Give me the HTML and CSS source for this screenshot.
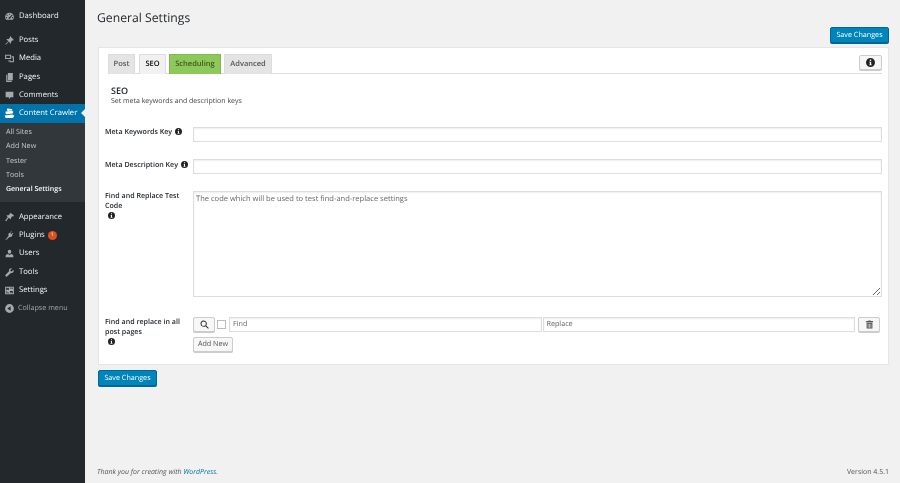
FILE: index.html
```html
<!DOCTYPE html>
<html lang="en">
<head>
<meta charset="utf-8">
<title>General Settings</title>
<link rel="stylesheet" href="styles.css">
</head>
<body>
<svg class="defs" width="0" height="0" aria-hidden="true">
  <symbol id="info" viewBox="0 0 16 16"><path fill-rule="evenodd" d="M8 0a8 8 0 1 1 0 16A8 8 0 0 1 8 0zM6.800 2.700v2.600h2.400V2.700zM5.800 6.600v1.600h1v3.200h-1V13h4.400v-1.600h-1V6.600z"/></symbol>
</svg>
<aside class="sidebar">
  <nav class="menu menu-first">
    <a class="item"><svg class="mi" viewBox="0 0 20 20"><path fill-rule="evenodd" d="M10 3a8 8 0 0 0-8 8c0 2 .7 3.700 1.900 5h12.200A8 8 0 0 0 18 11a8 8 0 0 0-8-8zM9 5h2v2H9zM5.500 6.500l1.500 1.400-1.400 1.400-1.400-1.500zM14.500 6.500l1.300 1.300-4 4.500a1.800 1.800 0 1 1-1.500-1.500zM3.500 11h2v2h-2zM14.500 11h2v2h-2z"/></svg>Dashboard</a>
  </nav>
  <nav class="menu menu-group">
    <a class="item"><svg class="mi" viewBox="0 0 20 20"><path d="M11 2l7 7-1.500 1-1-.5-3 3c.5 2 0 3-.5 3.500L8.500 12l-5 5.500-1-1L8 11.500 4.500 8C5 7.500 6 7 8 7.500l3-3-.5-1z"/></svg>Posts</a>
    <a class="item"><svg class="mi" viewBox="0 0 20 20"><path fill-rule="evenodd" d="M2 3h11v8H2zM4 5v4h7V5zM14 6h4v11h-8v-4h2v2h4V8h-2zM11 14.500a1.500 1.500 0 1 0 0 .1z"/></svg>Media</a>
    <a class="item"><svg class="mi" viewBox="0 0 20 20"><path d="M7 2h9v13H7zM4 5h2v11h8v2H4z"/></svg>Pages</a>
    <a class="item"><svg class="mi" viewBox="0 0 20 20"><path d="M3 3h14v10h-5l-3 4v-4H3z"/></svg>Comments</a>
  </nav>
  <div class="current">
    <a class="item item-current"><svg class="mi mi-white" viewBox="0 0 20 20"><path d="M6 1l8 1 2 2-9 1.500-2-2zM3 6.500L14 5l3 2-1 3L4 11.500 2.500 9zM1 13.500L15 12l4 2-3 4H3z"/></svg>Content Crawler<span class="arrow"></span></a>
    <div class="submenu">
      <a class="sub">All Sites</a>
      <a class="sub">Add New</a>
      <a class="sub">Tester</a>
      <a class="sub">Tools</a>
      <a class="sub sub-on">General Settings</a>
    </div>
  </div>
  <nav class="menu menu-group">
    <a class="item"><svg class="mi" viewBox="0 0 20 20"><path d="M12 2l6 4-1 2-2-.5-2 2.500c0 2-1 3-1 3L8.500 10.500 4 17l-2-1 5-7-3-2c2-1 3-1 4-1l2.500-2L10 3z"/></svg>Appearance</a>
    <a class="item"><svg class="mi" viewBox="0 0 20 20"><path d="M13 2l1 1-2.500 3 2 1.500L16 5l1 1-2.500 3 1 1c-1 2-3 3-5 2.500L7 15c0 1-1.500 2.500-4 2.500v-1.500c2 0 2.500-1 2.500-2l3-3.500C7.500 8.500 8 6 10 5l1 1z"/></svg>Plugins<span class="badge">1</span></a>
    <a class="item"><svg class="mi" viewBox="0 0 20 20"><path d="M10 3a3.200 3.200 0 0 1 3 4c0 2-1 3.500-3 3.500S7 9 7 7a3.200 3.200 0 0 1 3-4zM3 17v-3c0-1.500 3-2.500 4.500-3l2.500 2 2.500-2c1.500.5 4.500 1.500 4.500 3v3z"/></svg>Users</a>
    <a class="item"><svg class="mi" viewBox="0 0 20 20"><path d="M17 5l-3 3-2-.5-.5-2 3-3C12 1.500 9 3 9 6c0 .5 0 1 .2 1.500L3 14c-1 1-1 2 0 3s2 1 3 0l6.500-6.200C16 12 19 8 17 5z"/></svg>Tools</a>
    <a class="item"><svg class="mi" viewBox="0 0 20 20"><path fill-rule="evenodd" d="M2 3h16v14H2zM4 5v4h2V8h2v1h1V5H8v1H6V5zM11 5v2h1V6h2v1h2V5zM4 11v4h5v-1H8v-1H6v2H5v-4zM11 11v4h1v-2h2v2h2v-4z"/></svg>Settings</a>
    <a class="item item-collapse"><svg class="mi mi-collapse" viewBox="0 0 20 20"><path fill-rule="evenodd" d="M10 2a8 8 0 1 1 0 16 8 8 0 0 1 0-16zM12 6l-6 4 6 4z"/></svg>Collapse menu</a>
  </nav>
</aside>
<div class="main">
  <div class="content">
    <h1 class="title">General Settings</h1>
    <div class="actions"><button class="btn-primary">Save Changes</button></div>
    <section class="card">
      <div class="tabs-row">
        <div class="tabs">
          <span class="tab tab-post">Post</span>
          <span class="tab tab-active">SEO</span>
          <span class="tab tab-green">Scheduling</span>
          <span class="tab tab-adv">Advanced</span>
        </div>
        <button class="btn btn-info"><svg class="ic-info-lg"><use href="#info"/></svg></button>
      </div>
      <div class="intro">
        <h2 class="intro-title">SEO</h2>
        <p class="intro-text">Set meta keywords and description keys</p>
      </div>
      <div class="row row-1">
        <label class="lab">Meta Keywords Key <svg class="ic-info"><use href="#info"/></svg></label>
        <div class="field"><input class="input" type="text"></div>
      </div>
      <div class="row row-2">
        <label class="lab">Meta Description Key <svg class="ic-info"><use href="#info"/></svg></label>
        <div class="field"><input class="input" type="text"></div>
      </div>
      <div class="row row-3">
        <label class="lab">Find and Replace Test Code<br><svg class="ic-info ic-indent"><use href="#info"/></svg></label>
        <div class="field"><textarea class="textarea" placeholder="The code which will be used to test find-and-replace settings"></textarea></div>
      </div>
      <div class="row row-4">
        <label class="lab">Find and replace in all post pages<br><svg class="ic-info ic-indent"><use href="#info"/></svg></label>
        <div class="field">
          <div class="find-row">
            <button class="btn btn-search"><svg class="ic-search" viewBox="0 0 16 16"><path fill-rule="evenodd" d="M6.500 1a5.500 5.500 0 0 1 4.400 8.800l4.600 4.600-1.100 1.100-4.600-4.600A5.500 5.500 0 1 1 6.500 1zm0 1.500a4 4 0 1 0 0 8 4 4 0 0 0 0-8z"/></svg></button>
            <span class="check"></span>
            <input class="input input-find" type="text" placeholder="Find">
            <input class="input input-find" type="text" placeholder="Replace">
            <button class="btn btn-trash"><svg class="ic-trash" viewBox="0 0 12 14"><path fill-rule="evenodd" d="M4 0h4v1h4v2H0V1h4zM1 4h10v10H1zM3 5.500v7h1v-7zM5.500 5.500v7h1v-7zM8 5.500v7h1v-7z"/></svg></button>
          </div>
          <button class="btn btn-add">Add New</button>
        </div>
      </div>
    </section>
    <div class="actions-bottom"><button class="btn-primary">Save Changes</button></div>
  </div>
  <footer class="footer">
    <span class="thanks">Thank you for creating with <a class="link">WordPress</a>.</span>
    <span class="version">Version 4.5.1</span>
  </footer>
</div>
</body>
</html>
```
FILE: styles.css
```css
* { box-sizing: border-box; }
html, body { margin: 0; height: 100%; }
body {
  display: flex;
  height: 483px;
  overflow: hidden;
  background: #f1f1f1;
  color: #444;
  font: 7.500px/11px "Open Sans", sans-serif;
  text-rendering: geometricPrecision;
}
.sidebar, .main { filter: blur(.25px); }
button, input, textarea { text-rendering: geometricPrecision; }
.defs { position: absolute; }
.sidebar {
  flex: 0 0 85px;
  background: #23282d;
  padding-top: 7.500px;
  color: #eee;
}
.menu-first { margin-bottom: 5.500px; }
.item {
  display: flex;
  align-items: center;
  height: 18.300px;
  padding-left: 4px;
  font-size: 7.700px;
  color: #f4f4f4;
  white-space: nowrap;
}
.mi { width: 11px; height: 11px; margin-right: 4px; fill: #a4a9ae; flex: none; }
.mi-white { fill: #fff; }
.item-current { background: #0073aa; color: #fff; position: relative; height: 18.500px; margin-top: 0; }
.arrow {
  position: absolute;
  right: 0;
  top: 5px;
  border: 4px solid transparent;
  border-left-width: 0;
  border-right-color: #f1f1f1;
}
.submenu { background: #32373c; padding: 2px 0 5px; margin-bottom: 5.500px; }
.sub { display: block; height: 14.500px; line-height: 14.500px; padding-left: 6px; font-size: 7.200px; color: #c4c8cc; }
.sub-on { color: #fff; font-weight: 600; font-size: 7px; }
.badge {
  width: 9px; height: 9px; margin-left: 3px; border-radius: 50%;
  background: #e0501e; color: #fff; font-size: 5px; line-height: 9px; text-align: center;
}
.item-collapse { font-size: 7.200px; color: #a0a5aa; }
.mi-collapse { margin-right: 3px; }
.main { flex: 1; min-width: 0; display: flex; flex-direction: column; }
.content { flex: 1; padding: 0 11px 0 13px; }
.title { margin: 0 0 0 -1px; padding-top: 9px; font-size: 12.200px; line-height: 17px; font-weight: 400; color: #23282d; }
.actions { display: flex; justify-content: flex-end; margin-top: 1px; }
.btn-primary {
  height: 16px; width: 59px; padding: 0;
  background: #0085ba; border: 1px solid #006799; border-radius: 2px;
  box-shadow: 0 1px 0 #006799;
  color: #fff; font: 7.200px/14px "Open Sans", sans-serif;
}
.card { margin-top: 4px; height: 317.500px; background: #fff; border: 1px solid #e5e5e5; padding: 5.500px 6px 0; }
.tabs-row { display: flex; justify-content: space-between; align-items: flex-start; border-bottom: 1px solid #ddd; height: 20px; margin: 0 0 0 3px; }
.tabs { display: flex; }
.tab {
  height: 20px; line-height: 18px; font-size: 7.500px; font-weight: 600; text-align: center;
  background: #e4e4e4; border: 1px solid #ddd; border-bottom: 0; color: #555;
  width: 27px; margin-right: 4px;
}
.tab-active { background: #f1f1f1; color: #000; margin-right: 3px; }
.tab-green { background: #8ec75a; border-color: #7fb84e; color: #3d5a1e; width: 52px; margin-right: 3px; }
.tab-adv { width: 48px; margin-right: 0; }
.btn {
  background: #f7f7f7; border: 1px solid #ccc; border-radius: 2px;
  box-shadow: 0 1px 0 #ccc; padding: 0; color: #555;
  display: inline-flex; align-items: center; justify-content: center;
}
.btn-info { width: 23px; height: 15px; margin-top: 1px; }
.ic-info-lg { width: 9px; height: 9px; fill: #222; }
.intro { padding: 11px 0 0 6px; }
.intro-title { margin: 0; font-size: 9px; line-height: 12px; font-weight: 600; color: #23282d; }
.intro-text { margin: .500px 0 0; font-size: 7px; line-height: 10px; color: #444; }
.row { display: flex; }
.row-1 { margin-top: 19.500px; }
.row-2 { margin-top: 17.500px; }
.row-3 { margin-top: 16.500px; }
.row-4 { margin-top: 20px; }
.row-1 .lab, .row-2 .lab { padding-top: .500px; }
.lab { flex: 0 0 88px; padding-right: 3px; font-size: 7.100px; line-height: 10px; font-weight: 600; color: #23282d; }
.ic-info { width: 7px; height: 7px; fill: #222; margin-left: 1px; vertical-align: -1px; }
.ic-indent { margin-left: 3px; }
.field { flex: 1; min-width: 0; }
.input {
  display: block; width: 100%; height: 15px; padding: 0 3px;
  border: 1px solid #ddd; background: #fff; box-shadow: inset 0 1px 2px rgba(0,0,0,.07);
  font: 7.200px "Open Sans", sans-serif; color: #32373c;
}
.input::placeholder, .textarea::placeholder { color: #666; opacity: 1; }
.textarea {
  display: block; width: 100%; height: 106px; padding: 2px;
  border: 1px solid #ddd; background: #fff; box-shadow: inset 0 1px 2px rgba(0,0,0,.07);
  font: 7.550px/11px "Open Sans", sans-serif;
}
.find-row { display: flex; align-items: center; }
.btn-search { flex: none; width: 22px; height: 15px; margin-right: 2px; }
.ic-search { width: 9px; height: 9px; fill: #222; }
.check { flex: none; width: 9px; height: 9px; border: 1px solid #bbb; background: #fff; margin-right: 3px; }
.input-find { flex: 1; width: auto; min-width: 0; margin-right: 1px; }
.btn-trash { flex: none; width: 22px; height: 15px; margin: 0 2px 0 2px; }
.ic-trash { width: 7px; height: 9px; fill: #555; }
.btn-add { width: 40px; height: 15px; margin-top: 5px; font: 7.200px "Open Sans", sans-serif; }
.actions-bottom { margin-top: 5px; }
.footer { display: flex; justify-content: space-between; padding: 0 11px 4px 12px; height: 16px; font-size: 7px; color: #555; }
.thanks { font-style: italic; }
.link { color: #0073aa; }
```
